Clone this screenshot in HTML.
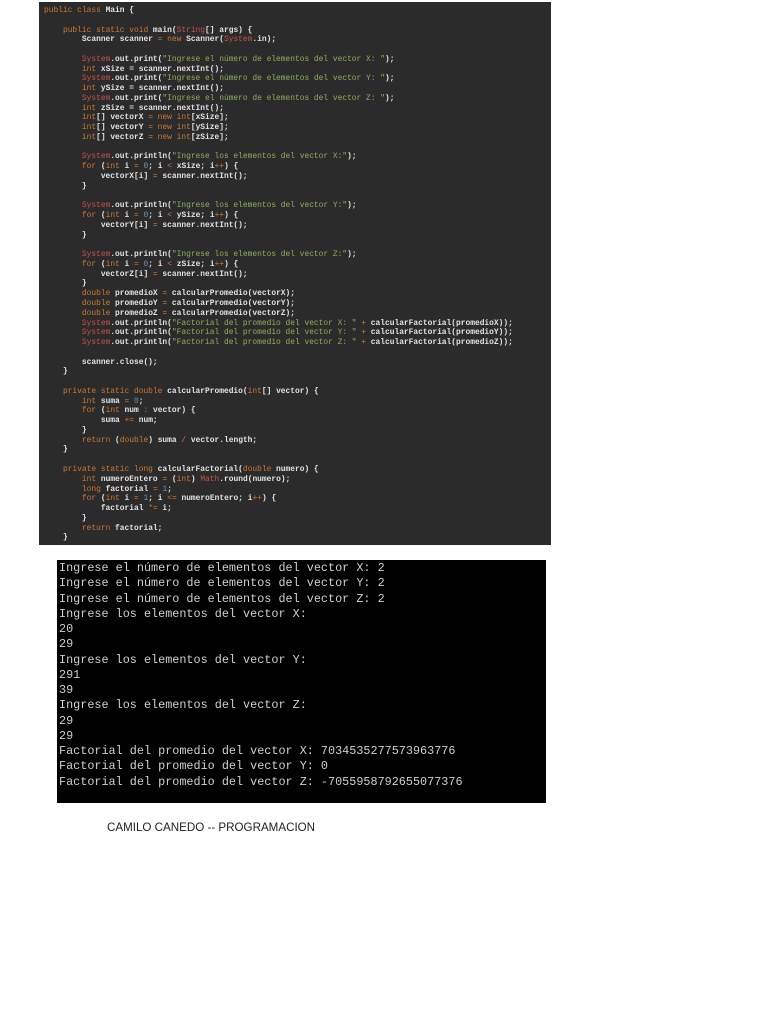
<!DOCTYPE html>
<html><head><meta charset="utf-8"><style>
html,body{margin:0;padding:0;background:#fff;width:768px;height:1024px;overflow:hidden;position:relative}
#code{position:absolute;left:39px;top:2px;width:512px;height:543px;background:#2b2b2b}
#code pre{position:absolute;left:5px;top:4px;margin:0;font-family:"Liberation Mono",monospace;font-size:7.9px;line-height:9.76px;color:#e2e2e2;font-weight:bold;white-space:pre}
.k{color:#cc7832;font-weight:normal}.s{color:#8fae5c;font-weight:normal}.r{color:#c9524a;font-weight:normal}.n{color:#6897bb;font-weight:normal}
#term{position:absolute;left:57px;top:560px;width:489px;height:243px;background:#000}
#term pre{position:absolute;left:2px;top:1px;margin:0;font-family:"Liberation Mono",monospace;font-size:11.8px;line-height:15.25px;color:#cfcfcf;white-space:pre}
#foot{position:absolute;left:107px;top:821px;font-family:"Liberation Sans",sans-serif;font-size:11.6px;color:#222}
</style></head><body>
<div id="code"><pre><span class="k">public class</span> Main {

    <span class="k">public static void</span> main(<span class="r">String</span>[] args) {
        Scanner scanner <span class="k">= new</span> Scanner(<span class="r">System</span>.in);

        <span class="r">System</span>.out.print(<span class="s">"Ingrese el número de elementos del vector X: "</span>);
        <span class="k">int</span> xSize = scanner.nextInt();
        <span class="r">System</span>.out.print(<span class="s">"Ingrese el número de elementos del vector Y: "</span>);
        <span class="k">int</span> ySize = scanner.nextInt();
        <span class="r">System</span>.out.print(<span class="s">"Ingrese el número de elementos del vector Z: "</span>);
        <span class="k">int</span> zSize = scanner.nextInt();
        <span class="k">int</span>[] vectorX <span class="k">= new int</span>[xSize];
        <span class="k">int</span>[] vectorY <span class="k">= new int</span>[ySize];
        <span class="k">int</span>[] vectorZ <span class="k">= new int</span>[zSize];

        <span class="r">System</span>.out.println(<span class="s">"Ingrese los elementos del vector X:"</span>);
        <span class="k">for</span> (<span class="k">int</span> i <span class="k">=</span> <span class="n">0</span>; i <span class="k">&lt;</span> xSize; i<span class="k">++</span>) {
            vectorX[i] <span class="k">=</span> scanner.nextInt();
        }

        <span class="r">System</span>.out.println(<span class="s">"Ingrese los elementos del vector Y:"</span>);
        <span class="k">for</span> (<span class="k">int</span> i <span class="k">=</span> <span class="n">0</span>; i <span class="k">&lt;</span> ySize; i<span class="k">++</span>) {
            vectorY[i] <span class="k">=</span> scanner.nextInt();
        }

        <span class="r">System</span>.out.println(<span class="s">"Ingrese los elementos del vector Z:"</span>);
        <span class="k">for</span> (<span class="k">int</span> i <span class="k">=</span> <span class="n">0</span>; i <span class="k">&lt;</span> zSize; i<span class="k">++</span>) {
            vectorZ[i] <span class="k">=</span> scanner.nextInt();
        }
        <span class="k">double</span> promedioX <span class="k">=</span> calcularPromedio(vectorX);
        <span class="k">double</span> promedioY <span class="k">=</span> calcularPromedio(vectorY);
        <span class="k">double</span> promedioZ <span class="k">=</span> calcularPromedio(vectorZ);
        <span class="r">System</span>.out.println(<span class="s">"Factorial del promedio del vector X: "</span> <span class="k">+</span> calcularFactorial(promedioX));
        <span class="r">System</span>.out.println(<span class="s">"Factorial del promedio del vector Y: "</span> <span class="k">+</span> calcularFactorial(promedioY));
        <span class="r">System</span>.out.println(<span class="s">"Factorial del promedio del vector Z: "</span> <span class="k">+</span> calcularFactorial(promedioZ));

        scanner.close();
    }

    <span class="k">private static double</span> calcularPromedio(<span class="k">int</span>[] vector) {
        <span class="k">int</span> suma <span class="k">=</span> <span class="n">0</span>;
        <span class="k">for</span> (<span class="k">int</span> num <span class="k">:</span> vector) {
            suma <span class="k">+=</span> num;
        }
        <span class="k">return</span> (<span class="k">double</span>) suma <span class="k">/</span> vector.length;
    }

    <span class="k">private static long</span> calcularFactorial(<span class="k">double</span> numero) {
        <span class="k">int</span> numeroEntero <span class="k">=</span> (<span class="k">int</span>) <span class="r">Math</span>.round(numero);
        <span class="k">long</span> factorial <span class="k">=</span> <span class="n">1</span>;
        <span class="k">for</span> (<span class="k">int</span> i <span class="k">=</span> <span class="n">1</span>; i <span class="k">&lt;=</span> numeroEntero; i<span class="k">++</span>) {
            factorial <span class="k">*=</span> i;
        }
        <span class="k">return</span> factorial;
    }</pre></div>
<div id="term"><pre>Ingrese el número de elementos del vector X: 2
Ingrese el número de elementos del vector Y: 2
Ingrese el número de elementos del vector Z: 2
Ingrese los elementos del vector X:
20
29
Ingrese los elementos del vector Y:
291
39
Ingrese los elementos del vector Z:
29
29
Factorial del promedio del vector X: 7034535277573963776
Factorial del promedio del vector Y: 0
Factorial del promedio del vector Z: -7055958792655077376</pre></div>
<div id="foot">CAMILO CANEDO -- PROGRAMACION</div>
</body></html>
